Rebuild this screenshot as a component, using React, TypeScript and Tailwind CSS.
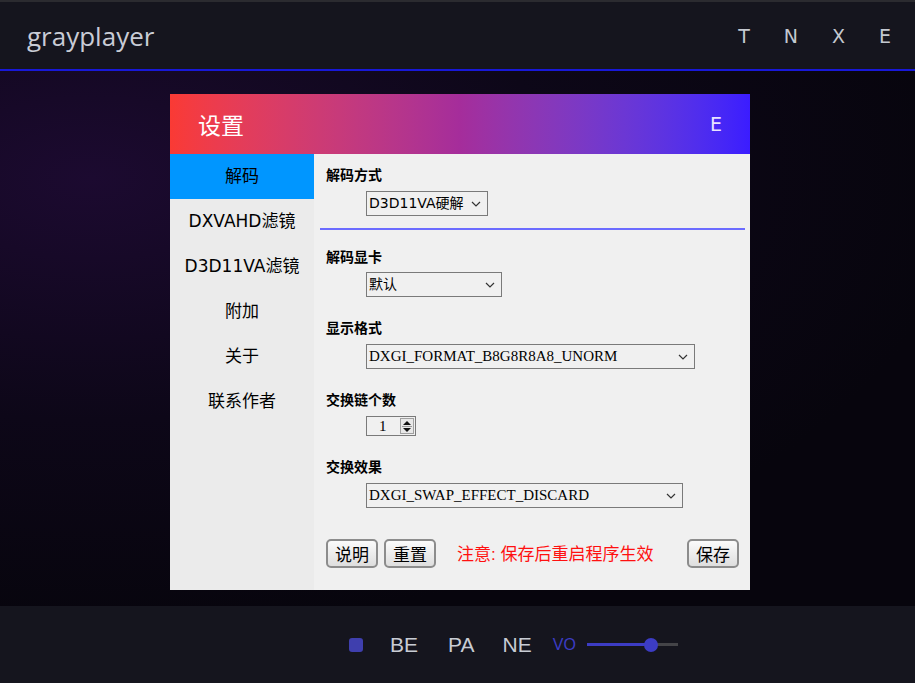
import React from "react";

const Chevron = () => (
  <svg width="10" height="6" viewBox="0 0 10 6" className="shrink-0">
    <path d="M1 1 L5 5 L9 1" fill="none" stroke="#333" strokeWidth="1.2" />
  </svg>
);

function Select({ text, w, serif }: { text: string; w: string; serif?: boolean }) {
  return (
    <div
      className={`${w} h-[25px] border border-[#7a7a7a] bg-[#f0f0f0] flex items-center justify-between pl-[2px] pr-[6px] text-[15px] text-black`}
      style={{ fontFamily: serif ? '"Liberation Serif", "Noto Sans CJK SC", serif' : '"DejaVu Sans", "Noto Sans CJK SC", sans-serif' }}
    >
      <span className={serif ? "" : "text-[14px]"}>{text}</span>
      <Chevron />
    </div>
  );
}

function Btn({ children }: { children: React.ReactNode }) {
  return (
    <button className="h-[29px] px-[7px] rounded-[5px] border-2 border-[#8c8c8c] bg-gradient-to-b from-[#fbfbfb] to-[#dedede] text-[17px] text-black leading-none">
      {children}
    </button>
  );
}

function Label({ children }: { children: React.ReactNode }) {
  return <div className="text-[14px] font-bold text-black leading-[18px]">{children}</div>;
}

export default function App() {
  const menu = ["解码", "DXVAHD滤镜", "D3D11VA滤镜", "附加", "关于", "联系作者"];
  return (
    <div
      className="w-[915px] h-[683px] flex flex-col bg-[#08060f] overflow-hidden"
      style={{ fontFamily: '"Open Sans", "Noto Sans CJK SC", sans-serif' }}
    >
      <div className="h-[2px] bg-[#2b2b30]" />
      <header className="h-[69px] bg-[#15151e] border-b-2 border-[#1818d8] flex items-center justify-between pl-[27px] pr-[24px] pt-[2px]">
        <div className="text-[26px] text-[#c9ccd6] leading-none pb-[2px]">grayplayer</div>
        <div className="flex gap-[34px] text-[19px] text-[#c4c8d0]" style={{ fontFamily: '"DejaVu Sans", sans-serif' }}>
          <span>T</span>
          <span>N</span>
          <span>X</span>
          <span>E</span>
        </div>
      </header>
      <main className="flex-1 flex justify-center pt-[23px] pl-[5px] bg-[radial-gradient(ellipse_at_10%_20%,#1c0a30_0%,#0d0718_40%,#07050d_75%)]">
        <div className="w-[580px] h-[496px] flex flex-col">
          <div className="h-[60px] bg-gradient-to-r from-[#fa3a34] via-[#a52d9b] to-[#3b1cff] flex items-center justify-between pl-[28px] pr-[28px] text-white">
            <span className="text-[23px]" style={{ fontFamily: '"Noto Sans CJK SC", sans-serif' }}>设置</span>
            <span className="text-[19px] text-[#e9e2ff]" style={{ fontFamily: '"DejaVu Sans", sans-serif' }}>E</span>
          </div>
          <div className="flex-1 flex">
            <nav className="w-[144px] bg-[#ebebeb] flex flex-col" style={{ fontFamily: '"DejaVu Sans", "Noto Sans CJK SC", sans-serif' }}>
              {menu.map((m, i) => (
                <div
                  key={m}
                  className={`h-[45px] flex items-center justify-center text-[17px] text-black ${i === 0 ? "bg-[#0096ff]" : ""}`}
                >
                  {m}
                </div>
              ))}
            </nav>
            <section className="flex-1 bg-[#f0f0f0] flex flex-col pl-[12px] pr-[5px] pt-[11px]" style={{ fontFamily: '"Noto Sans CJK SC", sans-serif' }}>
              <Label>解码方式</Label>
              <div className="pl-[40px] mt-[8px]">
                <Select text="D3D11VA硬解" w="w-[122px]" />
              </div>
              <div className="h-[2px] bg-[#6b6bff] mt-[12px] -ml-[6px]" />
              <div className="mt-[17px]"><Label>解码显卡</Label></div>
              <div className="pl-[40px] mt-[7px]">
                <Select text="默认" w="w-[136px]" />
              </div>
              <div className="mt-[21px]"><Label>显示格式</Label></div>
              <div className="pl-[40px] mt-[8px]">
                <Select text="DXGI_FORMAT_B8G8R8A8_UNORM" w="w-[329px]" serif />
              </div>
              <div className="mt-[21px]"><Label>交换链个数</Label></div>
              <div className="pl-[40px] mt-[8px]">
                <div className="w-[50px] h-[20px] border border-[#7a7a7a] bg-[#f0f0f0] flex items-center justify-between pl-[12px] pr-[1px]">
                  <span className="text-[15px] text-black leading-none" style={{ fontFamily: '"Liberation Serif", serif' }}>1</span>
                  <div className="w-[14px] h-[16px] border border-[#a0a0a0] bg-[#e8e8e8] flex flex-col items-center justify-center gap-[1px]">
                    <svg width="8" height="4" viewBox="0 0 8 4"><path d="M0 4 L4 0 L8 4 Z" fill="#111" /></svg>
                    <div className="w-[10px] h-px bg-[#999]" />
                    <svg width="8" height="4" viewBox="0 0 8 4"><path d="M0 0 L4 4 L8 0 Z" fill="#111" /></svg>
                  </div>
                </div>
              </div>
              <div className="mt-[21px]"><Label>交换效果</Label></div>
              <div className="pl-[40px] mt-[8px]">
                <Select text="DXGI_SWAP_EFFECT_DISCARD" w="w-[317px]" serif />
              </div>
              <div className="mt-[31px] flex items-center pr-[6px]">
                <div className="flex gap-[6px]">
                  <Btn>说明</Btn>
                  <Btn>重置</Btn>
                </div>
                <span className="ml-[21px] text-[17px] text-[#ff1010] pt-[3px]" style={{ fontFamily: '"Liberation Sans", "Noto Sans CJK SC", sans-serif' }}>注意: 保存后重启程序生效</span>
                <div className="ml-auto">
                  <Btn>保存</Btn>
                </div>
              </div>
            </section>
          </div>
        </div>
      </main>
      <footer className="h-[77px] bg-[#15151e] flex items-center justify-center pl-[112px]" style={{ fontFamily: '"Liberation Sans", sans-serif' }}>
        <div className="flex items-center">
          <div className="w-[14px] h-[14px] rounded-[3px] bg-[#3f3fae]" />
          <span className="ml-[27px] text-[21px] text-[#c8ccd4]">BE</span>
          <span className="ml-[30px] text-[21px] text-[#c8ccd4]">PA</span>
          <span className="ml-[28px] text-[21px] text-[#c8ccd4]">NE</span>
          <span className="ml-[21px] text-[16px] text-[#3c3cc4]">VO</span>
          <div className="ml-[11px] relative w-[91px] h-[3px] bg-[#444448]">
            <div className="absolute left-0 top-0 h-[3px] w-[64px] bg-[#3c3cc4]" />
            <div className="absolute left-[57px] -top-[5.5px] w-[14px] h-[14px] rounded-full bg-[#3c3cc4]" />
          </div>
        </div>
      </footer>
    </div>
  );
}
